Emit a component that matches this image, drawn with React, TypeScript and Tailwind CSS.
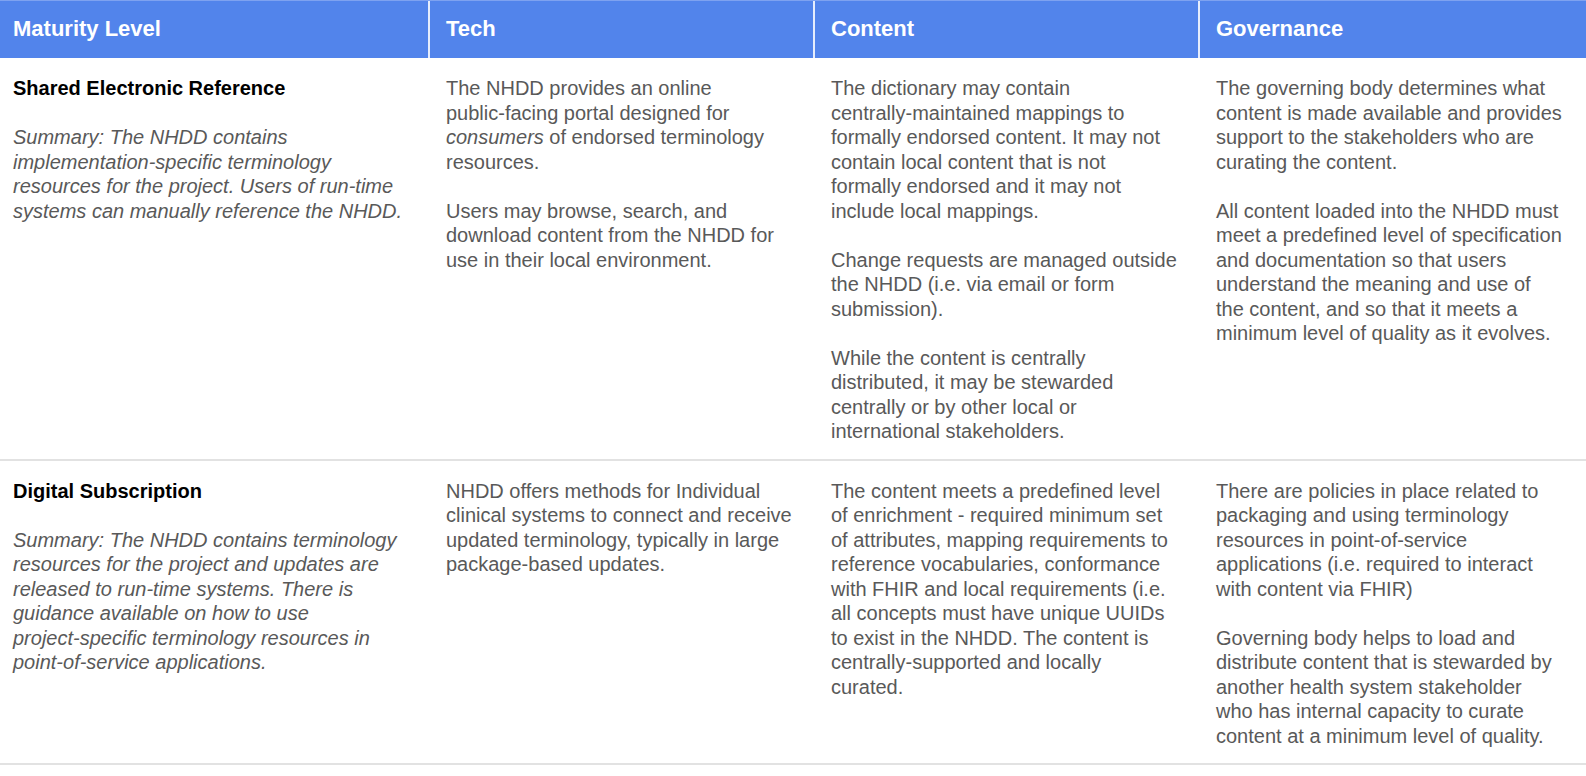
type Row = {
    title: string;
    summary: string;
    tech: React.ReactNode[];
    content: string[];
    governance: string[];
};

const headers = ['Maturity Level', 'Tech', 'Content', 'Governance'];

// keep hyphenated words together, the way the source document wraps them
function words(text: string) {
    return text.split(/(\S+-\S+)/).map((part, i) =>
        i % 2 === 1 ? (
            <span key={i} className="whitespace-nowrap">
                {part}
            </span>
        ) : (
            part
        ),
    );
}

const rows: Row[] = [
    {
        title: 'Shared Electronic Reference',
        summary:
            'Summary: The NHDD contains implementation-specific terminology resources for the project. Users of run-time systems can manually reference the NHDD.',
        tech: [
            <>
                The NHDD provides an online <span className="whitespace-nowrap">public-facing</span> portal designed for <em>consumers</em> of
                endorsed terminology resources.
            </>,
            'Users may browse, search, and download content from the NHDD for use in their local environment.',
        ],
        content: [
            'The dictionary may contain centrally-maintained mappings to formally endorsed content. It may not contain local content that is not formally endorsed and it may not include local mappings.',
            'Change requests are managed outside the NHDD (i.e. via email or form submission).',
            'While the content is centrally distributed, it may be stewarded centrally or by other local or international stakeholders.',
        ],
        governance: [
            'The governing body determines what content is made available and provides support to the stakeholders who are curating the content.',
            'All content loaded into the NHDD must meet a predefined level of specification and documentation so that users understand the meaning and use of the content, and so that it meets a minimum level of quality as it evolves.',
        ],
    },
    {
        title: 'Digital Subscription',
        summary:
            'Summary: The NHDD contains terminology resources for the project and updates are released to run-time systems. There is guidance available on how to use project-specific terminology resources in point-of-service applications.',
        tech: ['NHDD offers methods for Individual clinical systems to connect and receive updated terminology, typically in large package-based updates.'],
        content: [
            'The content meets a predefined level of enrichment - required minimum set of attributes, mapping requirements to reference vocabularies, conformance with FHIR and local requirements (i.e. all concepts must have unique UUIDs to exist in the NHDD. The content is centrally-supported and locally curated.',
        ],
        governance: [
            'There are policies in place related to packaging and using terminology resources in point-of-service applications (i.e. required to interact with content via FHIR)',
            'Governing body helps to load and distribute content that is stewarded by another health system stakeholder who has internal capacity to curate content at a minimum level of quality.',
        ],
    },
];

export default function App() {
    return (
        <div className="min-h-screen bg-white font-['Liberation_Sans',Arial,sans-serif] text-[20px] leading-[24.5px]">
            <div className="grid h-[58px] grid-cols-[428px_385px_385px_1fr] border-t border-[#7ea2f0] bg-[#5284eb] text-[22px] font-bold text-white">
                {headers.map((h, i) => (
                    <div key={h} className={i === 0 ? 'flex items-center pl-[13px]' : 'flex items-center border-l-2 border-[#e6edfc] pl-4'}>
                        {h}
                    </div>
                ))}
            </div>

            {rows.map((row) => (
                <div key={row.title} className="grid grid-cols-[428px_385px_385px_1fr] border-b-2 border-[#e2e2e2] pt-[18px] pb-[15px] text-[#595959]">
                    <div className="pr-4 pl-[13px]">
                        <p className="font-bold text-black">{row.title}</p>
                        <p className="mt-[24.5px] italic">{words(row.summary)}</p>
                    </div>
                    <Cell paras={row.tech.map((p) => (typeof p === 'string' ? words(p) : p))} />
                    <Cell paras={row.content.map(words)} />
                    <Cell paras={row.governance.map(words)} last />
                </div>
            ))}
        </div>
    );
}

function Cell({ paras, last }: { paras: React.ReactNode[]; last?: boolean }) {
    return (
        <div className={last ? 'flex min-w-0 flex-col gap-[24.5px] pr-[23px] pl-[18px]' : 'flex min-w-0 flex-col gap-[24.5px] pr-[20px] pl-[18px]'}>
            {paras.map((p, i) => (
                <p key={i}>{p}</p>
            ))}
        </div>
    );
}
